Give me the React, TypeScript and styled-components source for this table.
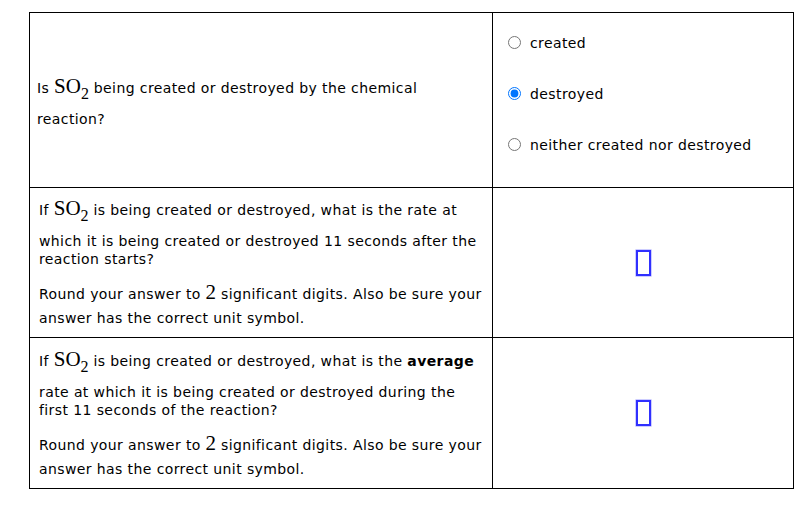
import React from 'react';
import styled, { createGlobalStyle } from 'styled-components';

const Global = createGlobalStyle`
  html, body { margin: 0; padding: 0; background: #fff; }
  body {
    font-family: "DejaVu Sans", Verdana, sans-serif;
    font-size: 14px;
    letter-spacing: 0.4px;
    color: #000;
  }
`;

const Page = styled.div`
  padding: 12px 0 0 29px;
`;

const Table = styled.table`
  border-collapse: collapse;
  width: 765px;
`;

const Row = styled.tr<{ $h: number }>`
  height: ${(p) => p.$h}px;
`;

const QuestionCell = styled.td<{ $shift?: number; $indent?: number }>`
  width: ${(p) => 447 - (p.$indent ?? 0)}px;
  border: 1px solid #000;
  padding: ${(p) => 6 + (p.$shift ?? 0)}px 8px 6px ${(p) => 7 + (p.$indent ?? 0)}px;
  vertical-align: middle;
`;

const AnswerCell = styled.td`
  border: 1px solid #000;
  vertical-align: middle;
  text-align: center;
  padding: 0;
`;

const Para = styled.p`
  margin: 0;
  line-height: 18px;
  & + & {
    margin-top: 14px;
  }
`;

const Chem = styled.span`
  display: inline-block;
  font-family: "Liberation Serif", "Times New Roman", serif;
  font-size: 21px;
  line-height: 21px;
  letter-spacing: 0;
  padding-bottom: 13px;
  & sub {
    font-size: 16px;
    line-height: 0;
    vertical-align: -6px;
  }
`;

const Num = styled.span`
  display: inline-block;
  font-family: "Liberation Serif", "Times New Roman", serif;
  font-size: 21px;
  line-height: 21px;
  letter-spacing: 0;
  padding-bottom: 6px;
`;

const Options = styled.div`
  display: flex;
  flex-direction: column;
  gap: 33px;
  padding: 0 10px 13px;
  text-align: left;
`;

const Option = styled.label`
  display: flex;
  align-items: center;
  gap: 6px;
  line-height: 18px;
`;

const Radio = styled.input`
  margin: 0 3px 0 5px;
  width: 13px;
  height: 13px;
`;

const AnswerBox = styled.span`
  display: inline-block;
  width: 11px;
  height: 22px;
  border: 2px solid #3030ff;
  box-shadow: 0 0 0 0.6px rgba(90, 90, 255, 0.5);
  vertical-align: middle;
`;

const Rate = ({ average }: { average?: boolean }) => (
  <>
    <Para>
      If <Chem>SO<sub>2</sub></Chem> is being created or destroyed, what is the{' '}
      {average ? (
        <>
          <b>average</b> rate at which it is being created or destroyed during the first 11 seconds of the reaction?
        </>
      ) : (
        <>rate at which it is being created or destroyed 11 seconds after the reaction starts?</>
      )}
    </Para>
    <Para>
      Round your answer to <Num>2</Num> significant digits. Also be sure your answer has the correct unit symbol.
    </Para>
  </>
);

export default function App() {
  return (
    <Page>
      <Global />
      <Table>
        <tbody>
          <Row $h={175}>
            <QuestionCell $shift={4}>
              <Para>
                Is <Chem>SO<sub>2</sub></Chem> being created or destroyed by the chemical reaction?
              </Para>
            </QuestionCell>
            <AnswerCell>
              <Options>
                <Option>
                  <Radio type="radio" name="q1" />
                  created
                </Option>
                <Option>
                  <Radio type="radio" name="q1" defaultChecked />
                  destroyed
                </Option>
                <Option>
                  <Radio type="radio" name="q1" />
                  neither created nor destroyed
                </Option>
              </Options>
            </AnswerCell>
          </Row>
          <Row $h={150}>
            <QuestionCell $indent={2}>
              <Rate />
            </QuestionCell>
            <AnswerCell>
              <AnswerBox />
            </AnswerCell>
          </Row>
          <Row $h={151}>
            <QuestionCell $indent={2}>
              <Rate average />
            </QuestionCell>
            <AnswerCell>
              <AnswerBox />
            </AnswerCell>
          </Row>
        </tbody>
      </Table>
    </Page>
  );
}
